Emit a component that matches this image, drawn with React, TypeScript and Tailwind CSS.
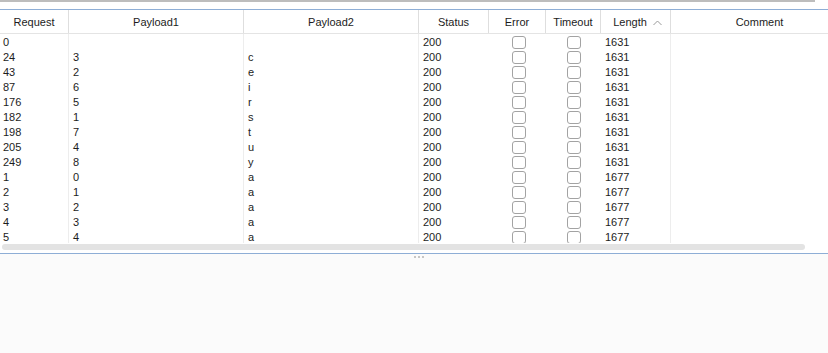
import React from "react";

type Row = {
  req: string;
  p1: string;
  p2: string;
  status: string;
  len: string;
};

const rows: Row[] = [
  { req: "0", p1: "", p2: "", status: "200", len: "1631" },
  { req: "24", p1: "3", p2: "c", status: "200", len: "1631" },
  { req: "43", p1: "2", p2: "e", status: "200", len: "1631" },
  { req: "87", p1: "6", p2: "i", status: "200", len: "1631" },
  { req: "176", p1: "5", p2: "r", status: "200", len: "1631" },
  { req: "182", p1: "1", p2: "s", status: "200", len: "1631" },
  { req: "198", p1: "7", p2: "t", status: "200", len: "1631" },
  { req: "205", p1: "4", p2: "u", status: "200", len: "1631" },
  { req: "249", p1: "8", p2: "y", status: "200", len: "1631" },
  { req: "1", p1: "0", p2: "a", status: "200", len: "1677" },
  { req: "2", p1: "1", p2: "a", status: "200", len: "1677" },
  { req: "3", p1: "2", p2: "a", status: "200", len: "1677" },
  { req: "4", p1: "3", p2: "a", status: "200", len: "1677" },
  { req: "5", p1: "4", p2: "a", status: "200", len: "1677" },
];

function Box() {
  return <div className="h-[13px] w-[14px] rounded-[3px] border border-[#a3a3a3] bg-white" />;
}

function HeadCell({ w, children, last }: { w: string; children: React.ReactNode; last?: boolean }) {
  return (
    <div
      className={`${w} flex h-full shrink-0 items-center justify-center pt-[2px] ${last ? "" : "border-r border-[#dedede]"}`}
    >
      {children}
    </div>
  );
}

export default function App() {
  return (
    <div
      className="flex h-[353px] w-[828px] flex-col overflow-hidden bg-white text-[11px] text-[#1c1c1c]"
      style={{ fontFamily: '"Liberation Sans", Arial, sans-serif' }}
    >
      {/* toolbar edge */}
      <div className="h-[9px] shrink-0">
        <div className="h-[2px] w-[815px] bg-[#bdbdbd]" />
      </div>
      <div className="h-px shrink-0 bg-[#8eaed6]" />

      {/* results table */}
      <div className="w-[828px] shrink-0 overflow-hidden">
        <div className="w-[848px]">
          <div className="flex h-[24px] border-b border-[#e4e4e4]">
            <HeadCell w="w-[69px]">Request</HeadCell>
            <HeadCell w="w-[175px]">Payload1</HeadCell>
            <HeadCell w="w-[175px]">Payload2</HeadCell>
            <HeadCell w="w-[70px]">Status</HeadCell>
            <HeadCell w="w-[57px]">Error</HeadCell>
            <HeadCell w="w-[55px]">Timeout</HeadCell>
            <HeadCell w="w-[70px]">
              <span className="flex items-center gap-[6px] pl-[4px]">
                Length
                <svg width="9" height="6" viewBox="0 0 9 6" fill="none">
                  <polyline points="0.5,5 4.5,1 8.5,5" stroke="#9a9a9a" strokeWidth="1" />
                </svg>
              </span>
            </HeadCell>
            <HeadCell w="w-[177px]" last>
              Comment
            </HeadCell>
          </div>

          <div className="h-[209px] overflow-hidden">
            {rows.map((r, i) => (
              <div key={i} className="flex h-[15px] items-center leading-none">
                <div className="flex h-full w-[69px] shrink-0 items-center border-r border-[#ededed] pl-[3px] pt-[2px]">
                  {r.req}
                </div>
                <div className="flex h-full w-[175px] shrink-0 items-center border-r border-[#ededed] pl-[4px] pt-[2px]">
                  {r.p1}
                </div>
                <div className="flex h-full w-[175px] shrink-0 items-center border-r border-[#ededed] pl-[4px] pt-[2px]">
                  {r.p2}
                </div>
                <div className="flex h-full w-[70px] shrink-0 items-center pl-[4px] pt-[2px]">{r.status}</div>
                <div className="flex h-full w-[57px] shrink-0 items-center justify-center pl-[2px] pt-[1px]">
                  <Box />
                </div>
                <div className="flex h-full w-[55px] shrink-0 items-center justify-center pt-[1px]">
                  <Box />
                </div>
                <div className="flex h-full w-[70px] shrink-0 items-center border-r border-[#ededed] pl-[4px] pt-[2px]">
                  {r.len}
                </div>
                <div className="h-full w-[177px] shrink-0" />
              </div>
            ))}
          </div>
        </div>
      </div>

      {/* horizontal scrollbar */}
      <div className="flex h-[10px] shrink-0 items-start px-[2px] pt-[1px]">
        <div className="h-[6px] w-[803px] rounded-full bg-[#e3e3e3]" />
      </div>

      <div className="h-px shrink-0 bg-[#8eaed6]" />

      {/* lower pane */}
      <div className="flex flex-1 justify-center bg-[#fbfbfb] pt-[2px]">
        <div className="flex h-[3px] gap-[2px] pl-[10px]">
          <div className="h-[2px] w-[2px] rounded-full bg-[#b5b5b5]" />
          <div className="h-[2px] w-[2px] rounded-full bg-[#b5b5b5]" />
          <div className="h-[2px] w-[2px] rounded-full bg-[#b5b5b5]" />
        </div>
      </div>
    </div>
  );
}
